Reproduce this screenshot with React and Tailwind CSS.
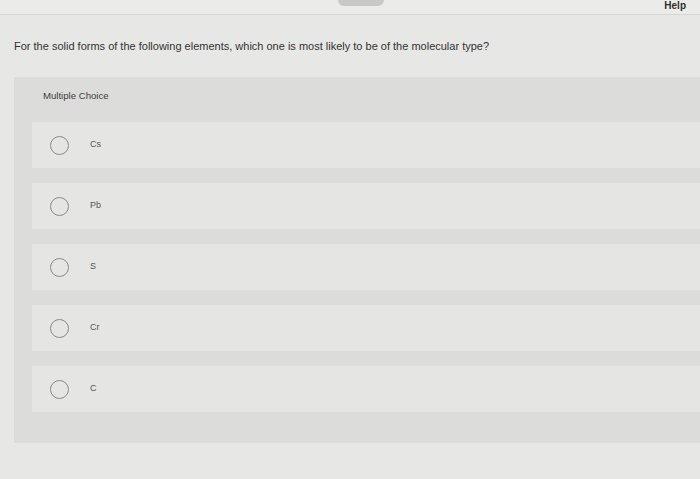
const options = ['Cs', 'Pb', 'S', 'Cr', 'C'];

const App = () => {
  return (
    <div
      className="w-[700px] h-[479px] overflow-hidden bg-[#e7e7e5] text-[#3a3a3a]"
      style={{ fontFamily: '"Liberation Sans", Arial, sans-serif' }}
    >
      <div className="relative h-[15px] border-b border-[#d6d6d4] bg-[#ebebe9]">
        <div className="absolute left-[338px] top-0 h-[6px] w-[46px] rounded-b-md bg-[#c9c9c7]" />
        <span className="absolute right-[14px] top-0 text-[10px] font-bold leading-[12px] text-[#2e2e2e]">
          Help
        </span>
      </div>

      <p className="mt-[25px] pl-[14px] text-[11px] leading-[13px] text-[#333]">
        For the solid forms of the following elements, which one is most likely to be of the molecular type?
      </p>

      <div className="ml-[14px] mt-[24px] h-[366px] bg-[#dcdcda] pt-[14px]">
        <div className="pl-[29px] text-[9.6px] leading-[10px] text-[#3c3c3c]">Multiple Choice</div>
        <div className="mt-[21px] flex flex-col gap-[15px] pl-[18px]">
          {options.map((opt) => (
            <div key={opt} className="flex h-[46px] items-center bg-[#e5e5e3]">
              <div className="ml-[18px] h-[19px] w-[19px] rounded-full border-[1.5px] border-[#8a8a8a]" />
              <span className="ml-[21px] text-[9px] text-[#555]">{opt}</span>
            </div>
          ))}
        </div>
      </div>
    </div>
  );
};

export default App;
